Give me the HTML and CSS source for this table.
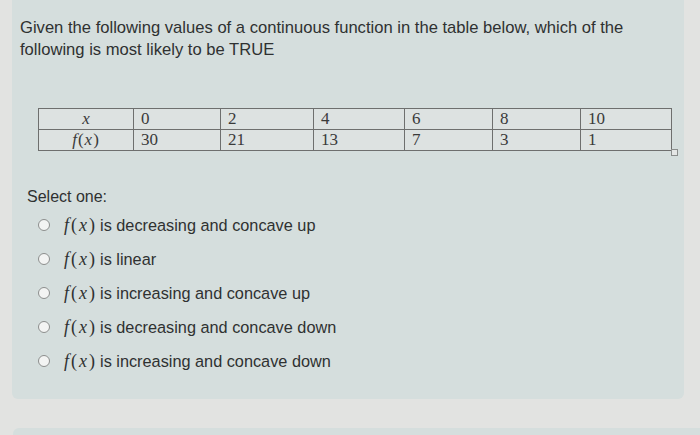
FILE: index.html
```html
<!DOCTYPE html>
<html>
<head>
<meta charset="utf-8">
<link rel="stylesheet" href="styles.css">
</head>
<body>
<div class="page">
  <div class="panel">
    <p class="question">Given the following values of a continuous function in the table below, which of the following is most likely to be TRUE</p>
    <div class="tablewrap">
      <table class="values">
        <colgroup>
          <col class="w0"><col class="w1"><col class="w2"><col class="w3"><col class="w4"><col class="w5"><col class="w6">
        </colgroup>
        <tr>
          <td class="head"><i>x</i></td>
          <td>0</td><td>2</td><td>4</td><td>6</td><td>8</td><td>10</td>
        </tr>
        <tr>
          <td class="head fhead"><i>f</i>(<i>x</i>)</td>
          <td>30</td><td>21</td><td>13</td><td>7</td><td>3</td><td>1</td>
        </tr>
      </table>
      <span class="handle"></span>
    </div>
    <div class="select">Select one:</div>
    <ul class="options">
      <li><span class="radio"></span><span class="fx"><i>f</i>(<i>x</i>)</span> is decreasing and concave up</li>
      <li><span class="radio"></span><span class="fx"><i>f</i>(<i>x</i>)</span> is linear</li>
      <li><span class="radio"></span><span class="fx"><i>f</i>(<i>x</i>)</span> is increasing and concave up</li>
      <li><span class="radio"></span><span class="fx"><i>f</i>(<i>x</i>)</span> is decreasing and concave down</li>
      <li><span class="radio"></span><span class="fx"><i>f</i>(<i>x</i>)</span> is increasing and concave down</li>
    </ul>
  </div>
  <div class="panel2"></div>
</div>
</body>
</html>
```

FILE: styles.css
```css
html, body {
  margin: 0;
  padding: 0;
  background: #e2e3e1;
  width: 700px;
  height: 435px;
  overflow: hidden;
}
.page {
  display: flex;
  flex-direction: column;
  gap: 29px;
  padding-left: 12px;
}
.panel {
  width: 672px;
  height: 399px;
  box-sizing: border-box;
  background: #d5dedd;
  border-radius: 0 0 6px 6px;
  padding: 17px 0 0 8px;
  font-family: "Liberation Sans", Arial, sans-serif;
  color: #2f3131;
}
.question {
  margin: 0;
  font-size: 16.6px;
  line-height: 22px;
  width: 640px;
}
.tablewrap {
  position: relative;
  margin-top: 47px;
  margin-left: 18px;
  width: 642px;
}
.values {
  border-collapse: collapse;
  table-layout: fixed;
  width: 633px;
  font-family: "Liberation Serif", "Times New Roman", serif;
  font-size: 17px;
  color: #3a3a3a;
  background: #dde2e1;
}
.w0 { width: 95px; }
.w1 { width: 87px; }
.w2 { width: 93px; }
.w3 { width: 91px; }
.w4 { width: 88px; }
.w5 { width: 88px; }
.w6 { width: 91px; }
.values td {
  border: 1px solid #6e6f6e;
  height: 20px;
  padding: 0 0 0 7px;
  line-height: 20px;
}
.values td.head {
  text-align: center;
  padding: 0;
}
.values td.fhead {
  letter-spacing: 1px;
}
.handle {
  position: absolute;
  right: 2px;
  bottom: -5px;
  width: 5px;
  height: 5px;
  border: 1px solid #8a8d8c;
  background: #e4e6e5;
}
.select {
  margin-top: 36px;
  margin-left: 7px;
  font-size: 16px;
  line-height: 20px;
}
.options {
  list-style: none;
  margin: 8px 0 0 0;
  padding: 0 0 0 18px;
  display: flex;
  flex-direction: column;
  gap: 14px;
}
.options li {
  display: flex;
  align-items: center;
  font-size: 16.3px;
  line-height: 20px;
  height: 20px;
}
.radio {
  width: 10px;
  height: 10px;
  border: 1px solid #8c8e8d;
  border-radius: 50%;
  background: #f3f4f3;
  margin-right: 14px;
  flex: none;
}
.fx {
  font-family: "Liberation Serif", "Times New Roman", serif;
  font-size: 18px;
  letter-spacing: 2px;
  margin-right: 3px;
}
.panel2 {
  height: 20px;
  margin-left: 1px;
  background: #d5dedd;
  border-radius: 6px 0 0 0;
}
```
